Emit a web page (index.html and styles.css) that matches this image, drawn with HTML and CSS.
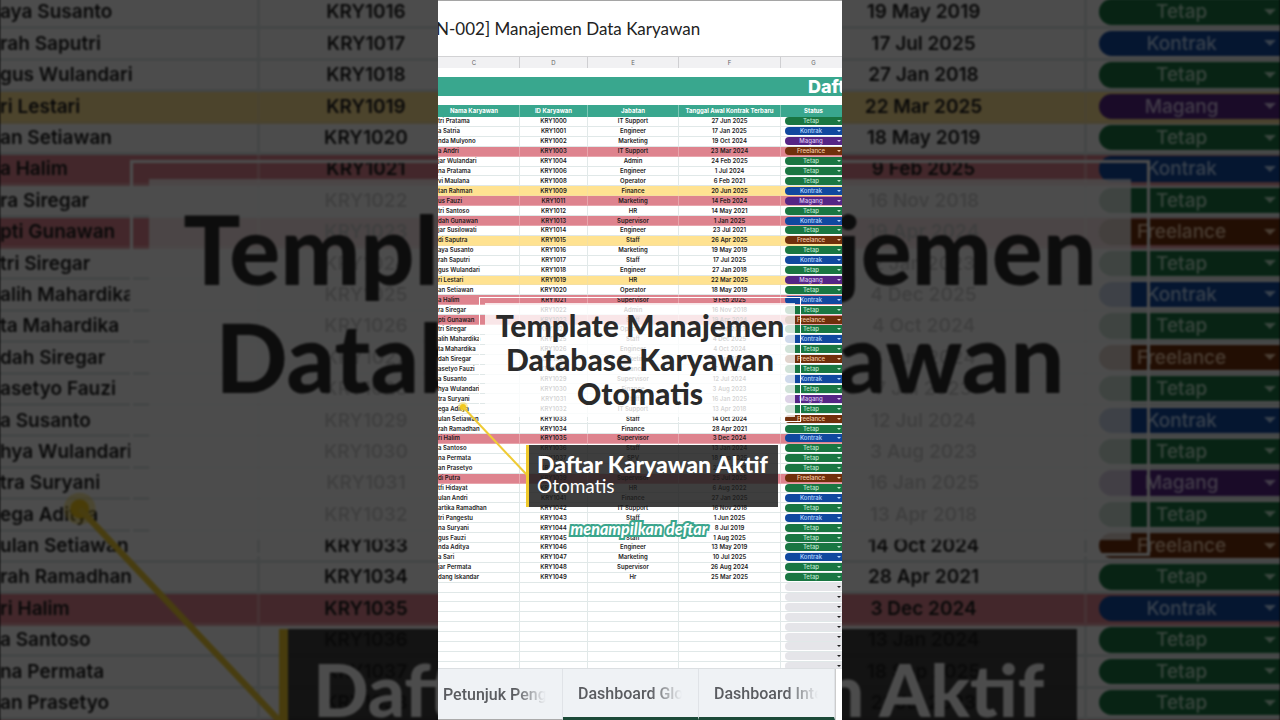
FILE: index.html
```html
<!DOCTYPE html>
<html lang="id">
<head>
<meta charset="utf-8">
<meta name="viewport" content="width=device-width, initial-scale=1">
<title>Manajemen Data Karyawan</title>
<link rel="stylesheet" href="styles.css">
</head>
<body>
<div class="backdrop" aria-hidden="true" inert><div class="enlarged" id="backdrop"></div></div>
<main class="stage" id="stage"></main>

<template id="frame-template">
  <div class="frame">
    <header class="doc-title">N-002] Manajemen Data Karyawan</header>
    <section class="sheet">
      <div class="letters"><span>C</span><span>D</span><span>E</span><span>F</span><span>G</span></div>
      <div class="band">Daft</div>
      <table class="grid">
        <colgroup><col class="c-name"><col class="c-id"><col class="c-job"><col class="c-date"><col class="c-status"></colgroup>
        <thead><tr><th class="name-head">Nama Karyawan</th><th>ID Karyawan</th><th>Jabatan</th><th>Tanggal Awal Kontrak Terbaru</th><th>Status</th></tr></thead>
        <tbody></tbody>
      </table>
    </section>
    <nav class="tabs">
      <button class="tab tab-first" type="button"><span>Petunjuk Pengg</span></button>
      <button class="tab tab-on" type="button"><span>Dashboard Glo</span></button>
      <button class="tab tab-on" type="button"><span>Dashboard Inte</span></button>
      <div class="tab-end"></div>
    </nav>

    <div class="outline"></div>
    <div class="headline"><h1>Template Manajemen<br>Database Karyawan<br>Otomatis</h1></div>
    <svg class="pointer" viewBox="0 0 80 80" aria-hidden="true">
      <circle cx="10" cy="10" r="5" fill="#f6d43c" opacity=".45"/>
      <circle cx="10" cy="10" r="3" fill="#f2c81c"/>
      <path d="M10 10 L74 78" stroke="#efcb34" stroke-width="2" fill="none"/>
    </svg>
    <div class="callout"><strong>Daftar Karyawan Aktif</strong><span>Otomatis</span></div>
    <p class="caption">menampilkan deftar</p>
  </div>
</template>
<script src="app.js"></script>
</body>
</html>
```

FILE: styles.css
```css
* { box-sizing: border-box; }

body {
  margin: 0;
  height: 100vh;
  overflow: hidden;
  position: relative;
  background: #000;
  font-family: Inter, "Liberation Sans", sans-serif;
}

.stage {
  position: relative;
  height: 100%;
  min-width: 0;
  aspect-ratio: 101 / 180;
  margin: 0 auto;
}

/* Enlarged, dimmed copy of the frame that fills the sides */
.backdrop {
  position: absolute;
  inset: 0;
  display: flex;
  align-items: center;
  overflow: hidden;
}
.enlarged {
  flex: none;
  width: 100%;
  aspect-ratio: 101 / 180;
  filter: blur(1px) brightness(0.3);
}
.enlarged .frame { zoom: 3.168; }

.frame {
  position: relative;
  display: flex;
  flex-direction: column;
  width: 100%;
  height: 100%;
  overflow: hidden;
  background: #fff;
  border-top: 1px solid #a5a5a5;
}

.doc-title {
  flex: none;
  height: 55px;
  line-height: 55px;
  margin-left: -2px;
  font-family: Lato, sans-serif;
  font-size: 17px;
  color: #222;
  white-space: nowrap;
}

.sheet { flex: 1; min-height: 0; overflow: hidden; }

.letters {
  display: grid;
  grid-template-columns: 82px 68px 91px 102px 66px;
  height: 12px;
  line-height: 11px;
  background: #f1f1f3;
  border-top: 1px solid #d2d2d4;
  font-size: 6px;
  color: #666;
  text-align: center;
}
.letters span { border-right: 1px solid #cfcfd2; }
.letters span:first-child { padding-right: 9px; }

.band {
  height: 19px;
  line-height: 19px;
  margin: 9px 0;
  padding-left: 370px;
  background: #39a78e;
  color: #fff;
  font-size: 18px;
  font-weight: 800;
  white-space: nowrap;
}

.grid {
  table-layout: fixed;
  width: 409px;
  height: 567px;
  border-spacing: 0;
  font-size: 6px;
  font-weight: 600;
  line-height: 8px;
  text-align: center;
  color: #1c1c1c;
}
.c-name { width: 82px; }
.c-id { width: 68px; }
.c-job { width: 91px; }
.c-date { width: 102px; }
.c-status { width: 66px; }

.grid th {
  height: 12px;
  padding: 0;
  background: #39a78e;
  border-right: 1px solid #7cc7b5;
  color: #fff;
  font-weight: 700;
  white-space: nowrap;
}
.grid .name-head { padding-right: 9px; }
.grid td {
  padding: 0;
  border-right: 1px solid #e2e9e9;
  border-bottom: 1px solid #e0e8e8;
  white-space: nowrap;
}
.grid .name { text-align: left; }
.late td { background: #de838e; border-color: #e8a5ac; }
.soon td { background: #ffe291; border-color: #f5dfa0; }

.grid .status { padding-left: 4px; font-weight: 500; }
.pill { display: block; position: relative; height: 8px; }
.pill::after {
  content: "";
  position: absolute;
  left: 52px;
  top: 3px;
  border: 2px solid transparent;
  border-top-color: currentColor;
  border-bottom: 0;
}
.pill select {
  appearance: none;
  display: block;
  width: 62px;
  height: 8px;
  margin: 0;
  padding: 0 10px 0 0;
  border: 0;
  border-radius: 4px;
  color: inherit;
  font: inherit;
  line-height: 8px;
  text-align: center;
  text-align-last: center;
}
.tetap { color: #bfe6cd; }
.tetap select { background: #197642; }
.kontrak { color: #b9d8ff; }
.kontrak select { background: #10489f; }
.magang { color: #dcc6f2; }
.magang select { background: #552585; }
.freelance { color: #f5cba8; }
.freelance select { background: #702f0b; }
.empty { color: #222; }
.empty select { background: #e5e5e9; }

.tabs {
  flex: none;
  display: flex;
  height: 52px;
  background: #fff;
  border-top: 1px solid #dcdfe2;
}
.tab {
  flex: none;
  width: 136px;
  padding: 0 16px 0 15px;
  border: 0;
  border-right: 1px solid #e0e3e7;
  border-bottom: 1px solid #aaa;
  background: #eff2f5;
  font-family: Roboto, sans-serif;
  font-size: 16px;
  font-weight: 500;
  color: #5a5c60;
  text-align: left;
}
.tab span {
  display: block;
  overflow: hidden;
  white-space: nowrap;
  mask-image: linear-gradient(to right, #000 70%, transparent);
}
.tab-first { width: 125px; padding-left: 5px; }
.tab-on { border-bottom: 3px solid #1c4a38; }
.tab-end { flex: 1; border-left: 1px solid #ccc; }

.outline {
  position: absolute;
  left: 41px;
  top: 296px;
  width: 322px;
  height: 125px;
  border: 1px solid #fff;
}
.headline {
  position: absolute;
  left: 47px;
  top: 302px;
  width: 310px;
  height: 114px;
  padding-top: 5px;
  background: rgba(255, 255, 255, 0.8);
}
.headline h1 {
  margin: 0;
  font-family: Lato, sans-serif;
  font-size: 30px;
  font-weight: 900;
  line-height: 34px;
  text-align: center;
  white-space: nowrap;
  color: #2a2a2a;
}

.pointer {
  position: absolute;
  left: 15px;
  top: 396px;
  width: 80px;
  height: 80px;
}

.callout {
  position: absolute;
  left: 88px;
  top: 444px;
  width: 252px;
  height: 62px;
  padding: 7px 0 0 8px;
  border-left: 3px solid #efc92c;
  background: rgba(30, 30, 30, 0.86);
  background-clip: padding-box;
  font-family: Lato, sans-serif;
  color: #fff;
  white-space: nowrap;
}
.callout strong, .callout span { display: block; }
.callout strong { font-size: 23px; font-weight: 900; line-height: 24px; }
.callout span { font-size: 19px; line-height: 20px; }

.caption {
  position: absolute;
  left: 0;
  right: 2px;
  top: 518px;
  margin: 0;
  font-family: Lato, sans-serif;
  font-size: 16px;
  font-style: italic;
  font-weight: 900;
  line-height: 20px;
  text-align: center;
  color: #fff;
  -webkit-text-stroke: 4px #3aa58c;
  paint-order: stroke fill;
}
```

FILE: app.js
```js
// name | id | job | date | status initial | highlight
const data = `tri Pratama|1000|IT Support|27 Jun 2025|T
a Satria|1001|Engineer|17 Jan 2025|K
nda Mulyono|1002|Marketing|19 Oct 2024|M
a Andri|1003|IT Support|23 Mar 2024|F|late
jar Wulandari|1004|Admin|24 Feb 2025|T
na Pratama|1006|Engineer|1 Jul 2024|T
vi Maulana|1008|Operator|6 Feb 2021|T
tan Rahman|1009|Finance|20 Jun 2025|K|soon
us Fauzi|1011|Marketing|14 Feb 2024|M|late
tri Santoso|1012|HR|14 May 2021|T
dah Gunawan|1013|Supervisor|1 Jan 2025|K|late
jar Susilowati|1014|Engineer|23 Jul 2021|T
di Saputra|1015|Staff|26 Apr 2025|F|soon
aya Susanto|1016|Marketing|19 May 2019|T
rah Saputri|1017|Staff|17 Jul 2025|K
gus Wulandari|1018|Engineer|27 Jan 2018|T
ri Lestari|1019|HR|22 Mar 2025|M|soon
an Setiawan|1020|Operator|18 May 2019|T
a Halim|1021|Supervisor|9 Feb 2025|K|late
ra Siregar|1022|Admin|16 Nov 2018|T
pti Gunawan|1023|Staff|19 Apr 2024|F|late
tri Siregar|1024|Operator|2 Jan 2023|T
alih Mahardika|1025|Staff|4 Dec 2025|K
ta Mahardika|1026|Engineer|4 Oct 2024|T
dah Siregar|1027|Marketing|8 Jun 2024|F
asetyo Fauzi|1028|Finance|7 Jul 2023|T
a Susanto|1029|Supervisor|12 Jul 2024|K
hya Wulandari|1030|Finance|3 Aug 2023|T
tra Suryani|1031|Staff|16 Jan 2025|M
ega Aditya|1032|IT Support|13 Apr 2018|T
ulan Setiawan|1033|Staff|14 Oct 2024|F
rah Ramadhan|1034|Finance|28 Apr 2021|T
ri Halim|1035|Supervisor|3 Dec 2024|K|late
a Santoso|1036|Staff|13 Jan 2024|T
na Permata|1037|SPV|18 Sep 2025|T
an Prasetyo|1038|Staff|21 Jul 2023|T
di Putra|1039|Supervisor|25 Jul 2025|F|late
tfi Hidayat|1040|HR|6 Aug 2022|T
ulan Andri|1041|Finance|27 Jan 2025|K
artika Ramadhan|1042|IT Support|16 Nov 2018|T
tri Pangestu|1043|Staff|1 Jun 2025|K
na Suryani|1044|Staff|8 Jul 2019|T
gus Fauzi|1045|Staff|1 Aug 2025|T
nda Aditya|1046|Engineer|13 May 2019|T
a Sari|1047|Marketing|10 Jul 2025|K
jar Permata|1048|Supervisor|26 Aug 2024|T
dang Iskandar|1049|Hr|25 Mar 2025|T`.split("\n").map(line => line.split("|"));

const statuses = { T: "Tetap", K: "Kontrak", M: "Magang", F: "Freelance" };
const emptyRows = 9;

function pill(label) {
  return `<span class="pill ${label ? label.toLowerCase() : "empty"}"><select aria-label="Status"><option>${label}</option></select></span>`;
}

const rows = data.map(([name, id, job, date, status, mark]) =>
  `<tr class="${mark || ""}"><td class="name">${name}</td><td>KRY${id}</td><td>${job}</td><td>${date}</td><td class="status">${pill(statuses[status])}</td></tr>`
).join("") + `<tr><td></td><td></td><td></td><td></td><td class="status">${pill("")}</td></tr>`.repeat(emptyRows);

const template = document.getElementById("frame-template");
for (const id of ["backdrop", "stage"]) {
  const copy = template.content.cloneNode(true);
  copy.querySelector("tbody").innerHTML = rows;
  document.getElementById(id).append(copy);
}
```
